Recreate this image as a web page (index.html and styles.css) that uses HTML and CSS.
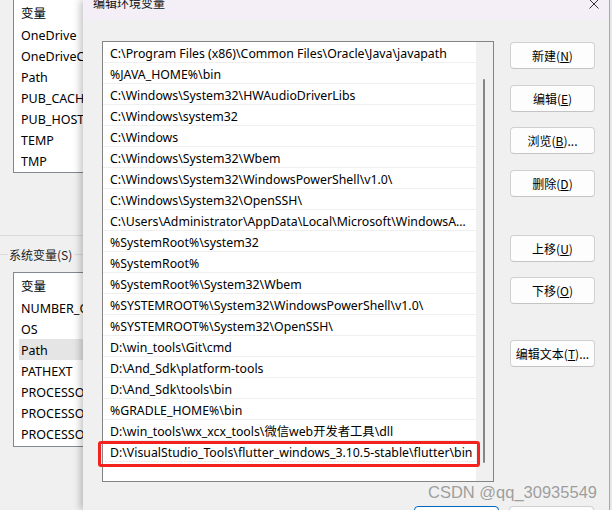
FILE: index.html
```html
<!DOCTYPE html>
<html lang="zh-CN">
<head>
  <meta charset="UTF-8">
  <title>编辑环境变量</title>
  <link rel="stylesheet" href="styles.css">
</head>
<body>
  <div class="screen">
    <div class="backwin">
      <div class="varlist user-vars">
        <div class="var-row">变量</div>
        <div class="var-row">OneDrive</div>
        <div class="var-row">OneDriveConsumer</div>
        <div class="var-row">Path</div>
        <div class="var-row">PUB_CACHE</div>
        <div class="var-row">PUB_HOSTED_URL</div>
        <div class="var-row">TEMP</div>
        <div class="var-row">TMP</div>
      </div>

      <div class="group-sep"></div>

      <div class="group-head">
        <span class="group-line short"></span>
        <span class="group-label">系统变量(S)</span>
        <span class="group-line"></span>
      </div>

      <div class="varlist sys-vars">
        <div class="var-row">变量</div>
        <div class="var-row">NUMBER_OF_PROCESSORS</div>
        <div class="var-row">OS</div>
        <div class="var-row selected">Path</div>
        <div class="var-row">PATHEXT</div>
        <div class="var-row">PROCESSOR_ARCHITECTURE</div>
        <div class="var-row">PROCESSOR_IDENTIFIER</div>
        <div class="var-row">PROCESSOR_LEVEL</div>
      </div>
    </div>

    <div class="dialog">
      <div class="titlebar">
        <span class="title">编辑环境变量</span>
        <svg class="close" width="10" height="10" viewBox="0 0 10 10">
          <path d="M0.5 0.5 L9.5 9.5 M9.5 0.5 L0.5 9.5" stroke="#333" stroke-width="1" fill="none"/>
        </svg>
      </div>

      <div class="dlg-body">
        <div class="pathlist">
          <div class="rows">
            <div class="path-row">C:\Program Files (x86)\Common Files\Oracle\Java\javapath</div>
            <div class="path-row">%JAVA_HOME%\bin</div>
            <div class="path-row">C:\Windows\System32\HWAudioDriverLibs</div>
            <div class="path-row">C:\Windows\system32</div>
            <div class="path-row">C:\Windows</div>
            <div class="path-row">C:\Windows\System32\Wbem</div>
            <div class="path-row">C:\Windows\System32\WindowsPowerShell\v1.0\</div>
            <div class="path-row">C:\Windows\System32\OpenSSH\</div>
            <div class="path-row">C:\Users\Administrator\AppData\Local\Microsoft\WindowsApps</div>
            <div class="path-row">%SystemRoot%\system32</div>
            <div class="path-row">%SystemRoot%</div>
            <div class="path-row">%SystemRoot%\System32\Wbem</div>
            <div class="path-row">%SYSTEMROOT%\System32\WindowsPowerShell\v1.0\</div>
            <div class="path-row">%SYSTEMROOT%\System32\OpenSSH\</div>
            <div class="path-row">D:\win_tools\Git\cmd</div>
            <div class="path-row">D:\And_Sdk\platform-tools</div>
            <div class="path-row">D:\And_Sdk\tools\bin</div>
            <div class="path-row">%GRADLE_HOME%\bin</div>
            <div class="path-row">D:\win_tools\wx_xcx_tools\微信web开发者工具\dll</div>
            <div class="path-row">D:\VisualStudio_Tools\flutter_windows_3.10.5-stable\flutter\bin</div>
          </div>
          <div class="scrollbar"><div class="thumb"></div></div>
          <div class="mark"></div>
        </div>

        <div class="side-btns">
          <div class="btn">新建(<u>N</u>)</div>
          <div class="btn">编辑(<u>E</u>)</div>
          <div class="btn">浏览(<u>B</u>)...</div>
          <div class="btn">删除(<u>D</u>)</div>
          <div class="btn spaced">上移(<u>U</u>)</div>
          <div class="btn">下移(<u>O</u>)</div>
          <div class="btn spaced-sm">编辑文本(<u>T</u>)...</div>
        </div>
      </div>

      <div class="dlg-foot">
        <div class="btn primary">确定</div>
        <div class="btn">取消</div>
      </div>

      <div class="watermark">CSDN @qq_30935549</div>
    </div>
  </div>
</body>
</html>
```

FILE: styles.css
```css
html, body {
  margin: 0;
  padding: 0;
}

body {
  width: 612px;
  height: 510px;
  overflow: hidden;
  background: #efefef;
  font-family: "Noto Sans", "Noto Sans CJK SC", sans-serif;
  font-size: 12.5px;
  color: #000;
}

.screen {
  display: flex;
  height: 510px;
}

/* window behind the dialog */
.backwin {
  width: 83px;
  flex-shrink: 0;
  overflow: hidden;
  background: #f0f0f0;
}

.varlist {
  width: 220px;
  margin-left: 13px;
  background: #fff;
  border: 1px solid #828790;
}

.user-vars {
  margin-top: -1px;
  padding: 3px 0 1px;
}

.sys-vars {
  margin-top: 8px;
  padding: 3px 0 2px;
}

.var-row {
  height: 18px;
  padding: 3px 0 0 2px;
  line-height: 18px;
  margin-left: 5px;
  white-space: nowrap;
}

.var-row:first-child {
  height: 21px;
  padding-top: 0;
  line-height: 21px;
}

.var-row.selected {
  background: #e5e5e5;
}

.group-sep {
  height: 1px;
  margin-top: 62px;
  background: #dadada;
}

.group-head {
  display: flex;
  align-items: center;
  height: 20px;
  margin-top: 8px;
}

.group-line {
  flex: 1;
  height: 1px;
  background: #dadada;
}

.group-line.short {
  flex: 0 0 8px;
}

.group-label {
  padding: 0 2px 0 1px;
  white-space: nowrap;
  font-family: "Noto Sans CJK SC", sans-serif;
  font-size: 12px;
  color: #222;
}

/* dialog */
.dialog {
  position: relative;
  width: 527px;
  flex-shrink: 0;
  box-sizing: border-box;
  border-right: 1px solid #a8a8a8;
  background: #f0f0f0;
  box-shadow: -3px 0 7px rgba(0, 0, 0, 0.22);
}

.titlebar {
  display: flex;
  justify-content: space-between;
  align-items: flex-start;
  height: 20px;
  padding: 0 10px 0 10px;
  background: #f4eef6;
}

.title {
  margin-top: -4px;
  line-height: 14px;
  font-family: "Noto Sans CJK SC", sans-serif;
  font-size: 12px;
  color: #111;
}

.close {
  margin-top: -1px;
}

.dlg-body {
  display: flex;
  gap: 16px;
  padding: 21px 0 0 19px;
}

.pathlist {
  position: relative;
  display: flex;
  width: 392px;
  height: 441px;
  box-sizing: border-box;
  border: 1px solid #848484;
  background: #fff;
}

.rows {
  width: 373px;
}

.path-row {
  height: 21px;
  box-sizing: border-box;
  padding: 3px 3px 0 7px;
  line-height: 17px;
  border-bottom: 1px solid #efefef;
  font-size: 12.3px;
  white-space: nowrap;
  overflow: hidden;
  text-overflow: ellipsis;
}

.scrollbar {
  width: 17px;
  background: #f0f0f0;
}

.thumb {
  width: 2px;
  height: 384px;
  margin: 37px 0 0 7px;
  border-radius: 1px;
  background: #868686;
}

.mark {
  position: absolute;
  left: -5px;
  top: 399px;
  width: 382px;
  height: 26px;
  box-sizing: border-box;
  border: 3px solid #f3221f;
  border-radius: 3px;
}

.side-btns {
  display: flex;
  flex-direction: column;
  padding-top: 1px;
}

.btn {
  width: 85px;
  height: 27px;
  box-sizing: border-box;
  margin-bottom: 15.5px;
  border: 1px solid #d0d0d0;
  border-bottom-color: #c4c4c4;
  border-radius: 4px;
  background: #fdfdfd;
  text-align: center;
  line-height: 25px;
  font-family: "Noto Sans CJK SC", sans-serif;
  font-size: 12px;
  white-space: nowrap;
}

.btn u {
  text-underline-offset: 1px;
}

.btn.spaced {
  margin-top: 22.5px;
}

.btn.spaced-sm {
  margin-top: 20.5px;
}

.dlg-foot {
  display: flex;
  justify-content: flex-end;
  gap: 10px;
  margin-top: 24px;
  padding-right: 15px;
}

.btn.primary {
  border: 1px solid #0067c0;
}

.watermark {
  position: absolute;
  right: 12px;
  top: 482px;
  line-height: 20px;
  font-family: "Liberation Sans", Arial, sans-serif;
  font-size: 16.5px;
  color: rgba(120, 120, 120, 0.7);
}
```
